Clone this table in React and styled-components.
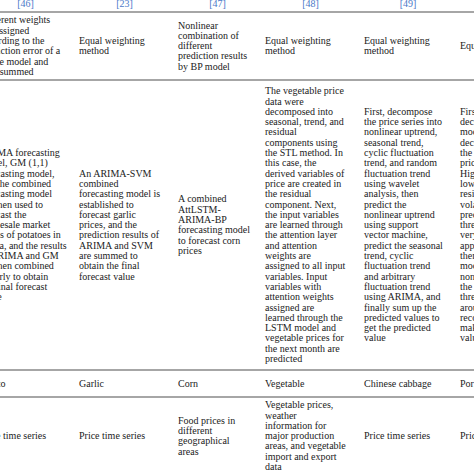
import React from "react";
import styled, { createGlobalStyle } from "styled-components";

const Global = createGlobalStyle`
  html, body { margin: 0; padding: 0; background: #ffffff; }
  body { font-family: "Liberation Serif", "Times New Roman", serif; }
`;

const Viewport = styled.div`
  width: 474px;
  height: 474px;
  overflow: hidden;
  background: #ffffff;
`;

const Table = styled.table`
  border-collapse: separate;
  border-spacing: 0;
  table-layout: fixed;
  width: 600px;
  margin: -3px 0 0 -24px;
  font-family: "Liberation Serif", "Times New Roman", serif;
  font-size: 10px;
  line-height: 10.3px;
  color: #222222;
`;

const Row = styled.tr`
  height: ${(p) => p.$h || "auto"};
`;

const Cell = styled.td`
  vertical-align: middle;
  text-align: left;
  padding: 2px 4px;
  font-size: 10px;
  line-height: 10.3px;
  border-bottom: ${(p) => (p.$rule ? "2px solid #a6a6a6" : "0")};
`;

const RefCell = styled(Cell)`
  text-align: center;
  color: #4a78c8;
`;

const Line = styled.span`
  display: block;
  white-space: nowrap;
  height: 10.3px;
`;

const widths = [99, 99, 87, 99, 96, 120];
const refs = ["[46]", "[23]", "[47]", "[48]", "[49]", "[50]"];

const rows = [
  {
    h: "68px",
    cells: [
      ["Different weights", "are assigned", "according to the", "prediction error of a", "single model and", "then summed"],
      ["Equal weighting", "method"],
      ["Nonlinear", "combination of", "different", "prediction results", "by BP model"],
      ["Equal weighting", "method"],
      ["Equal weighting", "method"],
      ["Equal weighting method"],
    ],
  },
  {
    h: "290px",
    cells: [
      [
        "ARIMA forecasting", "model, GM (1,1)", "forecasting model,", "and the combined", "forecasting model",
        "are then used to", "forecast the", "wholesale market", "prices of potatoes in", "China, and the results",
        "of ARIMA and GM", "are then combined", "linearly to obtain", "the final forecast", "value",
      ],
      [
        "An ARIMA-SVM", "combined", "forecasting model is", "established to", "forecast garlic", "prices, and the",
        "prediction results of", "ARIMA and SVM", "are summed to", "obtain the final", "forecast value",
      ],
      ["A combined", "AttLSTM-", "ARIMA-BP", "forecasting model", "to forecast corn", "prices"],
      [
        "The vegetable price", "data were", "decomposed into", "seasonal, trend, and", "residual",
        "components using", "the STL method. In", "this case, the", "derived variables of", "price are created in",
        "the residual", "component. Next,", "the input variables", "are learned through", "the attention layer",
        "and attention", "weights are", "assigned to all input", "variables. Input", "variables with",
        "attention weights", "assigned are", "learned through the", "LSTM model and", "vegetable prices for",
        "the next month are", "predicted",
      ],
      [
        "First, decompose", "the price series into", "nonlinear uptrend,", "seasonal trend,", "cyclic fluctuation",
        "trend, and random", "fluctuation trend", "using wavelet", "analysis, then", "predict the",
        "nonlinear uptrend", "using support", "vector machine,", "predict the seasonal", "trend, cyclic",
        "fluctuation trend", "and arbitrary", "fluctuation trend", "using ARIMA, and", "finally sum up the",
        "predicted values to", "get the predicted", "value",
      ],
      [
        "First, the EEMD", "decomposition", "model is used to", "decompose the", "the original",
        "price series into", "High-frequency,", "low-frequency and", "residual", "volatility terms,",
        "predict the", "three components", "very", "appropriate", "then", "models, and", "nonlinear",
        "the", "three", "around", "reconstructed to", "make the final", "value",
      ],
    ],
  },
  {
    h: "27px",
    cells: [["Potato"], ["Garlic"], ["Corn"], ["Vegetable"], ["Chinese cabbage"], ["Pork"]],
  },
  {
    h: "auto",
    cells: [
      ["Price time series"],
      ["Price time series"],
      ["Food prices in", "different", "geographical", "areas"],
      ["Vegetable prices,", "weather", "information for", "major production", "areas, and vegetable", "import and export", "data"],
      ["Price time series"],
      ["Price time series"],
    ],
  },
];

export default function App() {
  return (
    <Viewport>
      <Global />
      <Table>
        <colgroup>
          {widths.map((w, i) => (
            <col key={i} style={{ width: w }} />
          ))}
        </colgroup>
        <tbody>
          <Row>
            {refs.map((r) => (
              <RefCell key={r} $rule>
                {r}
              </RefCell>
            ))}
          </Row>
          {rows.map((row, ri) => (
            <Row key={ri} $h={row.h}>
              {row.cells.map((lines, ci) => (
                <Cell key={ci} $rule={ri < rows.length - 1}>
                  {lines.map((l, li) => (
                    <Line key={li}>{l}</Line>
                  ))}
                </Cell>
              ))}
            </Row>
          ))}
        </tbody>
      </Table>
    </Viewport>
  );
}
